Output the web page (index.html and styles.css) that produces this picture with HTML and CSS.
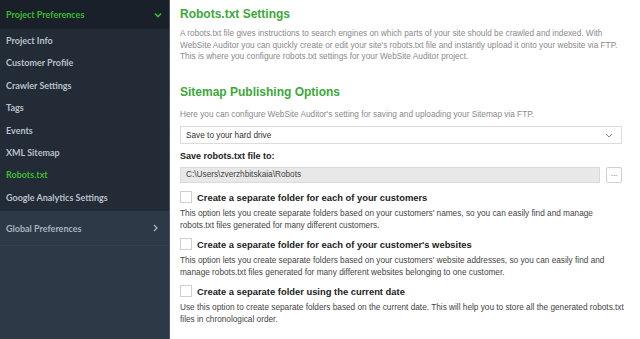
FILE: index.html
```html
<!DOCTYPE html>
<html lang="en">
  <head>
    <meta charset="utf-8" />
    <title>Robots.txt Settings</title>
    <link rel="stylesheet" href="styles.css">
  </head>
  <body>
    <div class="app">
      <nav class="sidebar">
        <div class="sidebar__head">
          <span>Project Preferences</span>
          <svg class="chev" width="8" height="6" viewBox="0 0 8 6"><path d="M1 1.5 L4 4.5 L7 1.5" fill="none" stroke="#3dbb2f" stroke-width="1.6"/></svg>
        </div>
        <ul class="menu">
          <li class="menu__item">Project Info</li>
          <li class="menu__item">Customer Profile</li>
          <li class="menu__item">Crawler Settings</li>
          <li class="menu__item">Tags</li>
          <li class="menu__item">Events</li>
          <li class="menu__item">XML Sitemap</li>
          <li class="menu__item menu__item--active">Robots.txt</li>
          <li class="menu__item">Google Analytics Settings</li>
        </ul>
        <div class="sidebar__global">
          <span>Global Preferences</span>
          <svg width="5" height="8" viewBox="0 0 5 8"><path d="M1 1 L4 4 L1 7" fill="none" stroke="#aab2bd" stroke-width="1.3"/></svg>
        </div>
      </nav>

      <main class="content">
        <h1 class="title">Robots.txt Settings</h1>
        <p class="text">A robots.txt file gives instructions to search engines on which parts of your site should be crawled and indexed. With WebSite Auditor you can quickly create or edit your site's robots.txt file and instantly upload it onto your website via FTP. This is where you configure robots.txt settings for your WebSite Auditor project.</p>

        <h2 class="title title--second">Sitemap Publishing Options</h2>
        <p class="text">Here you can configure WebSite Auditor's setting for saving and uploading your Sitemap via FTP.</p>

        <div class="select">
          <span>Save to your hard drive</span>
          <svg width="8" height="5" viewBox="0 0 8 5"><path d="M1 1 L4 4 L7 1" fill="none" stroke="#888" stroke-width="1"/></svg>
        </div>

        <div class="label">Save robots.txt file to:</div>
        <div class="path-row">
          <div class="path">C:\Users\zverzhbitskaia\Robots</div>
          <div class="browse">...</div>
        </div>

        <div class="option option--first">
          <span class="check"></span>
          <span class="option__label">Create a separate folder for each of your customers</span>
        </div>
        <p class="note">This option lets you create separate folders based on your customers' names, so you can easily find and manage robots.txt files generated for many different customers.</p>

        <div class="option">
          <span class="check"></span>
          <span class="option__label">Create a separate folder for each of your customer's websites</span>
        </div>
        <p class="note">This option lets you create separate folders based on your customers' website addresses, so you can easily find and manage robots.txt files generated for many different websites belonging to one customer.</p>

        <div class="option">
          <span class="check"></span>
          <span class="option__label">Create a separate folder using the current date</span>
        </div>
        <p class="note">Use this option to create separate folders based on the current date. This will help you to store all the generated robots.txt files in chronological order.</p>
      </main>
    </div>
  </body>
</html>
```

FILE: styles.css
```css
body {
  margin: 0;
  background: #fff;
  font-family: "Liberation Sans", Arial, sans-serif;
}

.app {
  display: flex;
  height: 339px;
  overflow: hidden;
}

.sidebar {
  width: 169px;
  flex-shrink: 0;
  background: #2e3947;
  border-right: 1px solid #4a5563;
  display: flex;
  flex-direction: column;
  font-family: Lato, sans-serif;
  font-weight: 700;
  font-size: 9px;
}

.sidebar__head {
  height: 29px;
  background: #1a2029;
  color: #3dbb2f;
  display: flex;
  align-items: center;
  justify-content: space-between;
  padding: 0 7px 0 6px;
}

.menu {
  list-style: none;
  margin: 0;
  padding: 1px 0 2px;
  background: #222b36;
}

.menu__item {
  height: 22.4px;
  line-height: 22.4px;
  padding-left: 6px;
  color: #b9c0c9;
}

.menu__item--active {
  color: #3dbb2f;
}

.sidebar__global {
  height: 34px;
  display: flex;
  align-items: center;
  justify-content: space-between;
  padding: 0 11px 0 6px;
  color: #aab2bd;
  border-bottom: 1px solid #364252;
}

.content {
  flex: 1;
  padding: 0 14px 0 10px;
}

.title {
  color: #3ca83a;
  font-size: 12px;
  line-height: 14px;
  font-weight: 700;
  margin: 7px 0 7px;
}

.title--second {
  margin-top: 22px;
  margin-bottom: 10px;
}

.text {
  color: #8a8a8a;
  font-size: 8.25px;
  line-height: 11.5px;
  margin: 0;
}

.select {
  margin: 6px 4px 0 0;
  height: 16px;
  border: 1px solid #dcdcdc;
  display: flex;
  align-items: center;
  justify-content: space-between;
  padding: 0 8px 0 5px;
  font-size: 8.25px;
  color: #333;
}

.label {
  font-size: 9px;
  line-height: 11px;
  font-weight: 700;
  color: #222;
  margin: 6.5px 0 5.5px;
}

.path-row {
  display: flex;
  gap: 6px;
  margin-right: 4px;
}

.path {
  flex: 1;
  height: 14px;
  line-height: 14px;
  background: #e8e8e8;
  border: 1px solid #dadada;
  padding-left: 5px;
  font-size: 8.25px;
  color: #444;
}

.browse {
  width: 14px;
  height: 14px;
  border: 1px solid #cfcfcf;
  border-radius: 2px;
  font-size: 8px;
  color: #555;
  text-align: center;
  line-height: 12px;
}

.option {
  display: flex;
  align-items: center;
  height: 12px;
  margin-top: 7px;
}

.option--first {
  margin-top: 8px;
}

.check {
  width: 10px;
  height: 10px;
  border: 1px solid #cfcfcf;
  margin-right: 5px;
}

.option__label {
  font-size: 9.4px;
  font-weight: 700;
  color: #222;
}

.note {
  color: #444;
  font-size: 8.25px;
  line-height: 11.5px;
  margin: 5px 0 0;
}
```
